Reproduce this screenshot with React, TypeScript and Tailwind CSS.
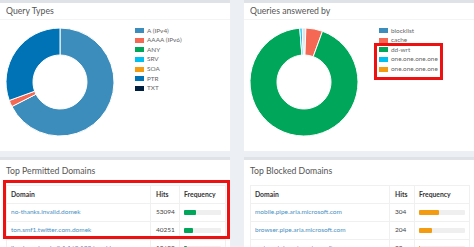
import React from 'react';

type Seg = { color: string; from: number; to: number };

function arcPath(cx: number, cy: number, r1: number, r2: number, a0: number, a1: number) {
  const p = (r: number, a: number) => {
    const t = (a * Math.PI) / 180;
    return `${(cx + r * Math.sin(t)).toFixed(2)} ${(cy - r * Math.cos(t)).toFixed(2)}`;
  };
  const large = a1 - a0 > 180 ? 1 : 0;
  return `M ${p(r2, a0)} A ${r2} ${r2} 0 ${large} 1 ${p(r2, a1)} L ${p(r1, a1)} A ${r1} ${r1} 0 ${large} 0 ${p(r1, a0)} Z`;
}

function Donut({ segs }: { segs: Seg[] }) {
  return (
    <svg width="108" height="108" viewBox="0 0 108 108" className="shrink-0">
      {segs.map((s, i) => (
        <path key={i} d={arcPath(54, 54, 27, 54, s.from, s.to)} fill={s.color} stroke="#fff" strokeWidth="1" />
      ))}
    </svg>
  );
}

function Legend({ items }: { items: { label: string; color: string }[] }) {
  return (
    <div className="ml-[21px] -mt-[2px] flex flex-col">
      {items.map(it => (
        <div key={it.label + it.color} className="h-[9.6px] flex items-center">
          <span className="w-[9px] h-[5px] shrink-0" style={{ backgroundColor: it.color }} />
          <span className="ml-[3px] text-[6.4px] leading-none text-[#666]">{it.label}</span>
        </div>
      ))}
    </div>
  );
}

function ChartBox({ title, segs, items, children }: { title: string; segs: Seg[]; items: { label: string; color: string }[]; children?: React.ReactNode }) {
  return (
    <div className="relative h-[151px] bg-white border-t-[3px] border-[#dfe3e8] flex flex-col">
      <div className="h-[17px] px-[6px] flex items-center text-[8.7px] text-[#555] border-b border-[#f4f4f4]">{title}</div>
      <div className="flex pt-[8px] pl-[6px]">
        <Donut segs={segs} />
        <Legend items={items} />
      </div>
      {children}
    </div>
  );
}

interface Row {
  domain: string;
  hits: string;
  pct: number;
}

function DomainTable({ title, rows, cols, bar, children }: { title: string; rows: Row[]; cols: [string, string, string]; bar: string; children?: React.ReactNode }) {
  return (
    <div className="relative h-[90px] bg-white border-t-[3px] border-[#dfe3e8]">
      <div className="h-[22px] px-[6px] flex items-center text-[8.7px] text-[#555]">{title}</div>
      <div className="px-[6px] pt-[3px]">
        <table className="w-full table-fixed border-collapse border border-[#f0f0f0] text-[6.5px] leading-none">
          <thead>
            <tr className="h-[18px]">
              <th className={`${cols[0]} text-left font-bold text-[#333] pl-[4px] text-[6.8px]`}>Domain</th>
              <th className={`${cols[1]} text-left font-bold text-[#333] pl-[5px] border-l border-[#f0f0f0] text-[6.8px]`}>Hits</th>
              <th className={`${cols[2]} text-left font-bold text-[#333] pl-[4px] border-l border-[#f0f0f0] text-[6.8px]`}>Frequency</th>
            </tr>
          </thead>
          <tbody>
            {rows.map(r => (
              <tr key={r.domain} className="h-[18px] border-t border-[#f0f0f0]">
                <td className="pl-[4px] text-[#4a90c2] whitespace-nowrap overflow-hidden">{r.domain}</td>
                <td className="pl-[5px] text-[#444] border-l border-[#f0f0f0]">{r.hits}</td>
                <td className="px-[4px] border-l border-[#f0f0f0]">
                  <div className="h-[5px] bg-[#efefef] rounded-[1px]">
                    <div className={`h-full ${bar} rounded-[1px]`} style={{ width: `${r.pct}%` }} />
                  </div>
                </td>
              </tr>
            ))}
          </tbody>
        </table>
      </div>
      {children}
    </div>
  );
}

export default function App() {
  const queryTypes = [
    { label: 'A (IPv4)', color: '#3c8dbc' },
    { label: 'AAAA (IPv6)', color: '#f56954' },
    { label: 'ANY', color: '#00a65a' },
    { label: 'SRV', color: '#00c0ef' },
    { label: 'SOA', color: '#f39c12' },
    { label: 'PTR', color: '#0073b7' },
    { label: 'TXT', color: '#001f3f' },
  ];
  const answeredBy = [
    { label: 'blocklist', color: '#3c8dbc' },
    { label: 'cache', color: '#f56954' },
    { label: 'dd-wrt', color: '#00a65a' },
    { label: 'one.one.one.one', color: '#00c0ef' },
    { label: 'one.one.one.one', color: '#f39c12' },
  ];

  return (
    <div className="w-[474px] h-[247px] overflow-hidden bg-[#ecf0f5] font-['Lato',sans-serif]">
      <div className="grid grid-cols-[230px_230px] gap-x-[14px] gap-y-[6px]">
        <ChartBox
          title="Query Types"
          items={queryTypes}
          segs={[
            { color: '#3c8dbc', from: 0, to: 243 },
            { color: '#f56954', from: 243, to: 250 },
            { color: '#0073b7', from: 250, to: 360 },
          ]}
        />
        <ChartBox
          title="Queries answered by"
          items={answeredBy}
          segs={[
            { color: '#dfe3e8', from: 358, to: 362 },
            { color: '#f56954', from: 2, to: 20 },
            { color: '#00a65a', from: 20, to: 355.5 },
            { color: '#00c0ef', from: 355.5, to: 358 },
          ]}
        >
          <div className="absolute left-[130px] top-[40px] w-[69px] h-[37px] border-[3px] border-[#ee1111]" />
        </ChartBox>

        <DomainTable
          title="Top Permitted Domains"
          bar="bg-[#00a65a]"
          cols={['w-[144px]', 'w-[29px]', 'w-[46px]']}
          rows={[
            { domain: 'no-thanks.invalid.domek', hits: '53094', pct: 32 },
            { domain: 'ton.smf1.twitter.com.domek', hits: '40251', pct: 24 },
            { domain: 'lb._dns-sd._udp.0.1.168.192.in-addr.arpa', hits: '13683', pct: 8 },
          ]}
        >
          <div className="absolute left-[3px] top-[20px] w-[227px] h-[59px] border-[3px] border-[#ee1111]" />
        </DomainTable>
        <DomainTable
          title="Top Blocked Domains"
          bar="bg-[#f39c12]"
          cols={['w-[139px]', 'w-[25px]', 'w-[55px]']}
          rows={[
            { domain: 'mobile.pipe.aria.microsoft.com', hits: '304', pct: 43 },
            { domain: 'browser.pipe.aria.microsoft.com', hits: '204', pct: 28 },
            { domain: 'watson.telemetry.microsoft.com', hits: '33', pct: 3 },
          ]}
        />
      </div>
    </div>
  );
}
